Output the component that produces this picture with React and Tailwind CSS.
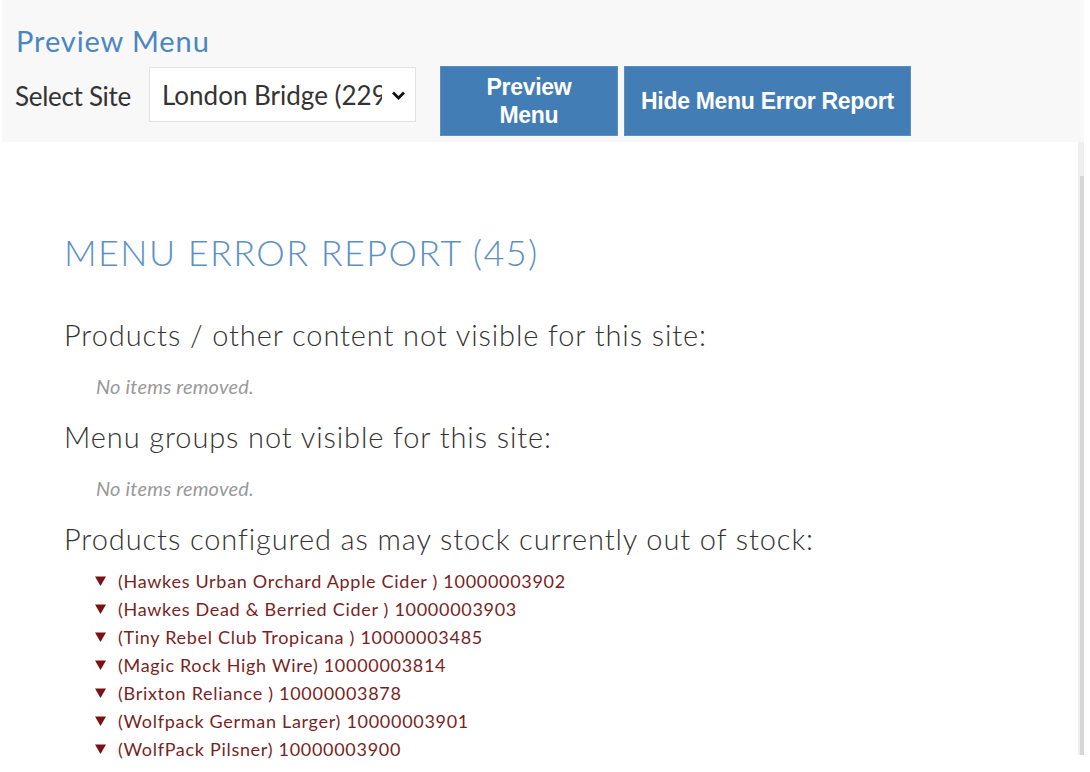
import React from 'react';

const outOfStock = [
  { name: '(Hawkes Urban Orchard Apple Cider )', code: '10000003902' },
  { name: '(Hawkes Dead & Berried Cider )', code: '10000003903' },
  { name: '(Tiny Rebel Club Tropicana )', code: '10000003485' },
  { name: '(Magic Rock High Wire)', code: '10000003814' },
  { name: '(Brixton Reliance )', code: '10000003878' },
  { name: '(Wolfpack German Larger)', code: '10000003901' },
  { name: '(WolfPack Pilsner)', code: '10000003900' },
];

const Chevron = () => (
  <svg width="15" height="10" viewBox="0 0 15 10" className="shrink-0">
    <path d="M2 2.5 L7.5 8 L13 2.5" fill="none" stroke="#111" strokeWidth="2.8" />
  </svg>
);

const Triangle = () => (
  <svg width="11" height="10" viewBox="0 0 11 10" className="shrink-0">
    <path d="M0 0.5 H11 L5.5 10 Z" fill="#7a1212" />
  </svg>
);

const Section = ({ title, children }) => (
  <div>
    <h3 className="text-[29px] font-light text-[#333] leading-[34px] tracking-[0.9px] whitespace-nowrap">{title}</h3>
    {children}
  </div>
);

const Empty = () => (
  <div className="h-[68px] pl-[32px] pt-[24px]">
    <p className="text-[20px] italic text-[#999] leading-[20px] tracking-[0.2px]">No items removed.</p>
  </div>
);

export default function App() {
  return (
    <div className="w-[1090px] h-[772px] bg-white overflow-hidden font-['Lato','Liberation_Sans',sans-serif]">
      <div className="ml-[2px] w-[1082px] h-[142px] bg-[#f8f8f8] pl-[14px] pt-[24px]">
        <h1 className="text-[29px] text-[#4a86c0] leading-[34px] tracking-[0.9px]">Preview Menu</h1>
        <div className="flex items-start mt-[8px]">
          <span className="text-[26px] text-[#333] mt-[15px] leading-[30px] -ml-[1px] tracking-[-0.3px]">Select Site</span>
          <div className="ml-[18px] mt-[1px] w-[267px] h-[55px] bg-white border border-[#e2e2e2] flex items-center pl-[12px] pr-[9px]">
            <span className="text-[26px] text-[#333] whitespace-nowrap overflow-hidden w-[220px] leading-[30px]">London Bridge (229)</span>
            <span className="ml-auto"><Chevron /></span>
          </div>
          <button className="ml-[24px] w-[178px] h-[70px] bg-[#437db5] border border-[#5b8fc0] text-white font-['Liberation_Sans',Arial,sans-serif] font-bold text-[23px] leading-[28px] tracking-[-0.3px] px-[22px]">
            Preview Menu
          </button>
          <button className="ml-[6px] w-[287px] h-[70px] bg-[#437db5] border border-[#5b8fc0] text-white font-['Liberation_Sans',Arial,sans-serif] font-bold text-[23px] leading-[28px] tracking-[-0.3px] whitespace-nowrap">
            Hide Menu Error Report
          </button>
        </div>
      </div>
      <div className="flex h-[613px]">
        <div className="flex-1 pl-[64px] pt-[88px]">
          <h2 className="text-[36px] font-light text-[#5b90c8] leading-[44px] tracking-[1.4px]">MENU ERROR REPORT (45)</h2>
          <div className="mt-[44px] flex flex-col">
            <Section title="Products / other content not visible for this site:">
              <Empty />
            </Section>
            <Section title="Menu groups not visible for this site:">
              <Empty />
            </Section>
            <Section title="Products configured as may stock currently out of stock:">
              <ul className="pl-[31px] pt-[11px]">
                {outOfStock.map((item) => (
                  <li key={item.code} className="flex items-center h-[28px] text-[18px] text-[#7a1f1f] tracking-[0.7px] whitespace-nowrap">
                    <span className="w-[23px] flex"><Triangle /></span>
                    <span>{item.name} {item.code}</span>
                  </li>
                ))}
              </ul>
            </Section>
          </div>
        </div>
        <div className="w-[6px] mr-[6px] bg-[#efefef] flex flex-col">
          <div className="h-[34px]" />
          <div className="flex-1 bg-[#d6d6d6] ml-[2px]" />
        </div>
      </div>
    </div>
  );
}
